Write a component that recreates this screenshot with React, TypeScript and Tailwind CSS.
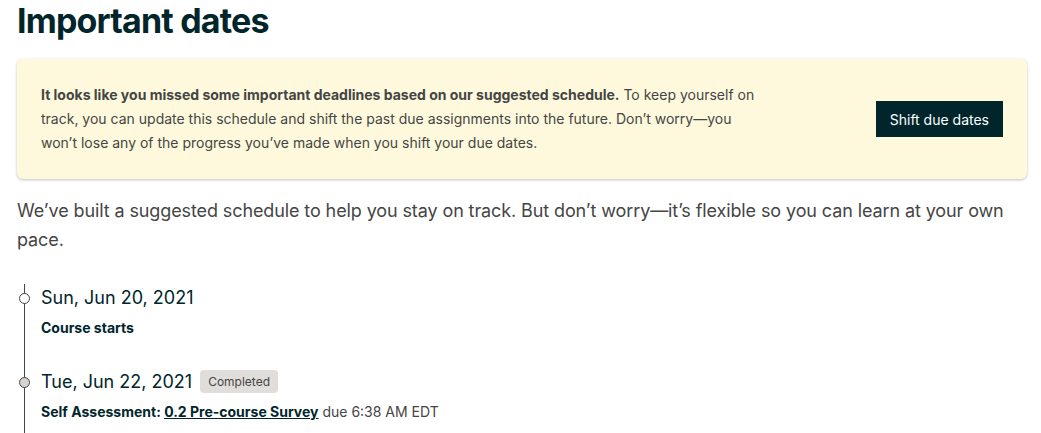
import React from 'react';

const font = { fontFamily: 'Inter, "Noto Sans", sans-serif' };

type Item = {
  date: string;
  filled?: boolean;
  badge?: string;
  body: React.ReactNode;
};

const items: Item[] = [
  {
    date: 'Sun, Jun 20, 2021',
    body: <span className="font-bold text-[#00262b]">Course starts</span>,
  },
  {
    date: 'Tue, Jun 22, 2021',
    filled: true,
    badge: 'Completed',
    body: (
      <span className="text-[#00262b]">
        <span className="font-bold">Self Assessment: </span>
        <a href="#" className="font-bold underline">0.2 Pre-course Survey</a>
        <span className="text-[#454545]"> due 6:38 AM EDT</span>
      </span>
    ),
  },
];

export default function App() {
  return (
    <div className="h-[433px] overflow-hidden bg-white pl-[17px] pr-[14px]" style={font}>
      <h1 className="text-[34px] font-bold leading-[41px] tracking-[-0.024em] text-[#00262b]">Important dates</h1>

      <div className="mt-[18px] flex items-center rounded-md bg-[#fef9dc] py-6 pl-6 pr-6 shadow-[0_1px_3px_rgba(0,0,0,0.25)]">
        <p className="w-[730px] text-[14px] leading-6 text-[#454545]">
          <span className="font-bold">
            It looks like you missed some important deadlines based on our suggested schedule.
          </span>{' '}
          To keep yourself on track, you can update this schedule and shift the past due assignments into the
          future. Don’t worry—you won’t lose any of the progress you’ve made when you shift your due dates.
        </p>
        <div className="flex flex-1 justify-end">
          <button className="h-9 bg-[#00262b] px-[14px] text-[14px] text-white">Shift due dates</button>
        </div>
      </div>

      <p className="mt-[17px] text-[18px] leading-[29px] tracking-[-0.006em] text-[#454545]">
        We’ve built a suggested schedule to help you stay on track. But don’t worry—it’s flexible so you can learn
        at your own pace.
      </p>

      <div className="relative ml-[7px] mt-[30px] border-l border-[#454545] pb-10 pl-4">
        {items.map((it, i) => (
          <div key={i} className={i > 0 ? 'relative mt-7' : 'relative'}>
            <span
              className={
                'absolute left-[-22px] top-[9px] h-[11px] w-[11px] rounded-full border border-[#454545] ' +
                (it.filled ? 'bg-[#d7d3d1]' : 'bg-white')
              }
            />
            <div className="flex h-7 items-center gap-2">
              <span className="text-[18px] leading-7 text-[#00262b]">{it.date}</span>
              {it.badge && (
                <span className="mt-[-1px] rounded-[4px] bg-[#e1dddb] px-2 text-[12px] leading-[23px] text-[#454545]">
                  {it.badge}
                </span>
              )}
            </div>
            <div className="mt-1 text-[14px] leading-6">{it.body}</div>
          </div>
        ))}
      </div>
    </div>
  );
}
